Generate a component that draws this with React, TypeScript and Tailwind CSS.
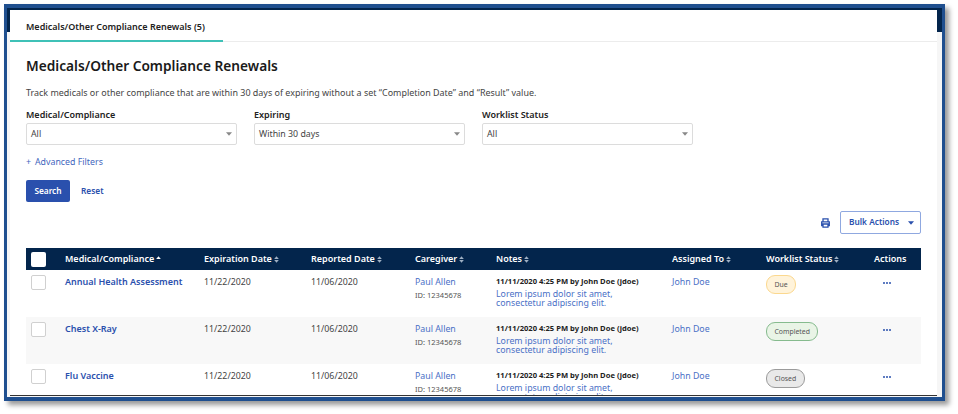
const COLS = "grid grid-cols-[39px_139px_107px_104px_81px_176px_94px_108px_47px]";

const ROWS = [
  { name: "Annual Health Assessment", status: "Due", badge: "bg-[#fff3da] border-[#fbd88f]", striped: false },
  { name: "Chest X-Ray", status: "Completed", badge: "bg-[#e9f4e6] border-[#86bb8e]", striped: true },
  { name: "Flu Vaccine", status: "Closed", badge: "bg-[#e9e9e9] border-[#9b9b9b]", striped: false },
];

const HEADERS = ["Expiration Date", "Reported Date", "Caregiver", "Notes", "Assigned To", "Worklist Status"];

function SortIcon({ active }: { active?: boolean }) {
  return (
    <svg width="5" height="7" viewBox="0 0 5 7" className="ml-[2px] shrink-0">
      <path d="M2.5 .3 4.8 2.9H.2z" fill={active ? "#ffffff" : "#9fb0c4"} />
      {!active && <path d="M2.5 6.7 .2 4.1h4.6z" fill="#9fb0c4" />}
    </svg>
  );
}

function Caret({ className }: { className: string }) {
  return (
    <svg width="6" height="4" viewBox="0 0 6 4" className={className}>
      <path d="M0 .2h6L3 3.8z" fill="currentColor" />
    </svg>
  );
}

function Filter({ label, value }: { label: string; value: string }) {
  return (
    <div className="w-[211px]">
      <div className="h-[15px] text-[9px] leading-[14px] font-semibold text-[#222]">{label}</div>
      <div className="flex h-[22px] items-center justify-between rounded-[2px] border border-[#dcdcdc] bg-white pl-[4px] pr-[4px] text-[8.8px] text-[#444]">
        <span className="pt-[1px]">{value}</span>
        <Caret className="text-[#888]" />
      </div>
    </div>
  );
}

export default function App() {
  return (
    <div className="h-[414px] w-[958px] overflow-hidden bg-white pl-[4px] pt-[4px] font-['Noto_Sans',sans-serif]">
      <div className="h-[397px] w-[941px] overflow-hidden border-[3px] border-t-[4px] border-b-[4px] border-[#1f4f8f] bg-[linear-gradient(#03254c_24px,#f6f6f6_24px)] pl-[3px] pr-[5px] pt-[2px] shadow-[4px_4px_5px_rgba(0,0,0,0.4)]">
        <div className="h-[386px] overflow-hidden border-b border-[#333] bg-white">
          {/* Tab strip */}
          <div className="h-[32px] border-b border-[#ececec]">
            <div className="h-[32px] w-[213px] border-b-[2px] border-[#3fc1b7] pl-[16px] pt-[9px] text-[9px] leading-[15px] font-semibold whitespace-nowrap text-[#222]">
              Medicals/Other Compliance Renewals (5)
            </div>
          </div>

          <div className="px-[16px]">
            <h1 className="pt-[14px] text-[13.7px] leading-[20px] font-semibold text-[#1a1a1a]">
              Medicals/Other Compliance Renewals
            </h1>
            <p className="mt-[10px] text-[8.95px] leading-[13px] text-[#444]">
              Track medicals or other compliance that are within 30 days of expiring without a set “Completion Date” and “Result” value.
            </p>

            <div className="mt-[9px] flex gap-[17px]">
              <Filter label="Medical/Compliance" value="All" />
              <Filter label="Expiring" value="Within 30 days" />
              <Filter label="Worklist Status" value="All" />
            </div>

            <div className="mt-[11px] flex h-[14px] items-center text-[8.8px] text-[#3f66bd]">
              <span className="w-[9px]">+</span>
              Advanced Filters
            </div>

            <div className="mt-[10px] flex items-center">
              <button className="h-[22px] w-[44px] rounded-[2px] bg-[#2a50ad] text-[8.3px] font-semibold text-white">Search</button>
              <span className="ml-[11px] pt-[1px] text-[8.3px] font-semibold text-[#2a50ad]">Reset</span>
            </div>

            <div className="mt-[9px] flex items-center justify-end">
              <svg width="9" height="10" viewBox="0 0 9 10" className="mr-[10px] text-[#2a50ad]">
                <path d="M2 3.5V.8h5v2.7M2 7.5H.7V3.8h7.6v3.7H7M2 6h5v3.2H2z" fill="none" stroke="currentColor" strokeWidth="1.3" />
              </svg>
              <div className="flex h-[23px] w-[81px] items-center rounded-[2px] border border-[#8fa8e0] pl-[8px] text-[8.3px] font-semibold whitespace-nowrap text-[#2a50ad]">
                Bulk Actions
                <Caret className="ml-[9px]" />
              </div>
            </div>

            {/* Table */}
            <div className="mt-[14px]">
              <div className={`${COLS} h-[22px] items-center bg-[#03254c] text-[9px] font-semibold text-white`}>
                <div className="ml-[5px] h-[15px] w-[15px] rounded-[2px] bg-white" />
                <div className="flex items-center">
                  Medical/Compliance
                  <SortIcon active />
                </div>
                {HEADERS.map((h) => (
                  <div key={h} className="flex items-center">
                    {h}
                    <SortIcon />
                  </div>
                ))}
                <div>Actions</div>
              </div>

              {ROWS.map((r) => (
                <div key={r.name} className={`${COLS} h-[47px] pt-[5px] text-[8.8px] leading-[14px] ${r.striped ? "bg-[#f8f8f8]" : "bg-white"}`}>
                  <div className="ml-[5px] h-[15px] w-[15px] rounded-[2px] border border-[#d0d0d0] bg-white" />
                  <div className="text-[9px] font-semibold text-[#2a50ad]">{r.name}</div>
                  <div className="text-[#444]">11/22/2020</div>
                  <div className="text-[#444]">11/06/2020</div>
                  <div>
                    <div className="text-[#4a70c6]">Paul Allen</div>
                    <div className="text-[7.5px] leading-[12px] text-[#555]">ID: 12345678</div>
                  </div>
                  <div>
                    <div className="text-[7.6px] leading-[13px] font-bold text-[#222]">11/11/2020 4:25 PM by John Doe (jdoe)</div>
                    <div className="mt-[2px] text-[8.8px] leading-[9px] text-[#4a70c6]">
                      Lorem ipsum dolor sit amet,
                      <br />
                      consectetur adipiscing elit.
                    </div>
                  </div>
                  <div className="text-[#4a70c6]">John Doe</div>
                  <div>
                    <span className={`inline-flex h-[19px] items-center rounded-[9px] border px-[7.5px] text-[6.9px] text-[#555] ${r.badge}`}>
                      {r.status}
                    </span>
                  </div>
                  <div className="flex gap-[1px] pl-[9px] pt-[7px]">
                    <span className="h-[2px] w-[2px] rounded-full bg-[#2a50ad]" />
                    <span className="h-[2px] w-[2px] rounded-full bg-[#2a50ad]" />
                    <span className="h-[2px] w-[2px] rounded-full bg-[#2a50ad]" />
                  </div>
                </div>
              ))}
            </div>
          </div>
        </div>
      </div>
    </div>
  );
}
